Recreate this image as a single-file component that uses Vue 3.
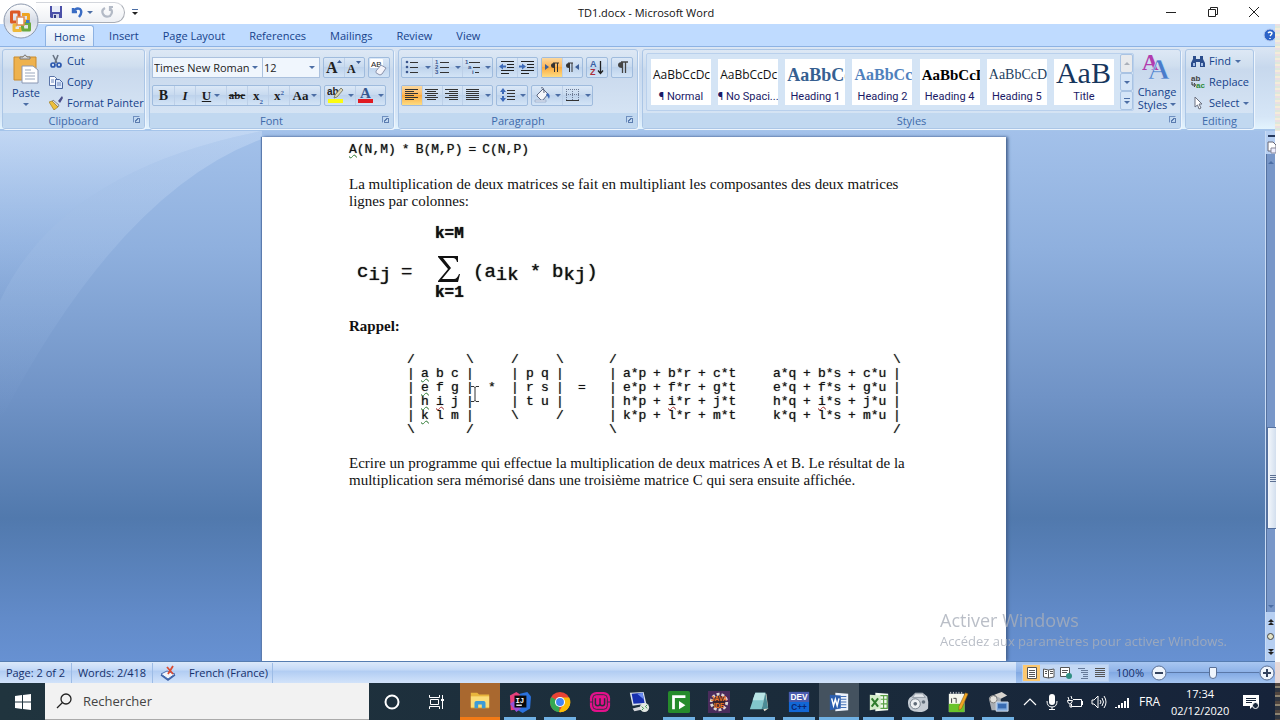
<script setup>
import { ref } from 'vue'

const tabs = ['Home', 'Insert', 'Page Layout', 'References', 'Mailings', 'Review', 'View']

const lines = (rows, color = '#222') =>
  rows.map(([x, y, w]) => `<path d="M${x} ${y}.5h${w}" stroke="${color}"/>`).join('')

const icons = {
  grow: '<text x="1" y="15" font-family="Liberation Serif" font-size="16" font-weight="bold" fill="#222">A</text><path d="M12 5l2.500-3 2.500 3z" fill="#3d5f98"/>',
  shrink: '<text x="2" y="15" font-family="Liberation Serif" font-size="12" font-weight="bold" fill="#222">A</text><path d="M11 3h5l-2.500 3z" fill="#3d5f98"/>',
  clear: '<rect x="0" y="1" width="13" height="9" rx="1" fill="#fff"/><text x="1" y="9" font-family="Liberation Sans" font-size="8" fill="#222">AB</text><path d="M6 13l5-6 5 3-4 6q-2 2-4 0-3-1-2-3z" fill="#f4f4fa" stroke="#8b93ac"/>',
  highlight: '<text x="0" y="9" font-family="Liberation Sans" font-size="10" font-weight="bold" fill="#222">ab</text><path d="M8 9l6-7 2 2-6 7-3 1z" fill="#dcd6b4" stroke="#6d6d5a" stroke-width=".8"/><path d="M1 13h15v4H1z" fill="#fbfb12"/>',
  fontcolor: '<text x="3" y="12" font-family="Liberation Serif" font-size="15" font-weight="bold" fill="#35588f">A</text><path d="M1 13h15v4H1z" fill="#e01b22"/>',
  bullets: '<g fill="#3a568e"><circle cx="3" cy="4" r="1.300"/><circle cx="3" cy="9" r="1.300"/><circle cx="3" cy="14" r="1.300"/></g>' + lines([[6, 4, 8], [6, 9, 8], [6, 14, 8]], '#333'),
  numbers: '<g font-family="Liberation Sans" font-size="6" font-weight="bold" fill="#3a568e"><text x="1" y="6">1</text><text x="1" y="11">2</text><text x="1" y="16">3</text></g>' + lines([[6, 4, 9], [6, 9, 9], [6, 14, 9]], '#333'),
  multi: '<g font-family="Liberation Sans" font-size="6" font-weight="bold" fill="#3a568e"><text x="1" y="6">1</text><text x="4" y="11">a</text><text x="8" y="16">i</text></g>' + lines([[5, 4, 11], [9, 9, 7], [11, 14, 4]], '#333'),
  outdent: lines([[3, 3, 13], [9, 6, 7], [9, 9, 7], [3, 12, 13], [3, 15, 8]]) + '<path d="M1 8.500l4-3v2h3v2H5v2z" fill="#3d6ab8"/>',
  indent: lines([[3, 3, 13], [9, 6, 7], [9, 9, 7], [3, 12, 13], [3, 15, 8]]) + '<path d="M8 8.500l-4-3v2H1v2h3v2z" fill="#3d6ab8"/>',
  ltr: '<path d="M2 6l4 3-4 3z" fill="#3d5f98"/><path d="M10 5h6M11.500 5v9M14.500 5v9" stroke="#333" fill="none"/><path d="M11 5v5q-3 0-3-2.500T11 5z" fill="#333"/>',
  rtl: '<path d="M16 6l-4 3 4 3z" fill="#3d5f98"/><path d="M5 5h5M6.500 5v9M9 5v9" stroke="#333" fill="none"/><path d="M6 5v5q-3 0-3-2.500T6 5z" fill="#333"/>',
  sort: '<g font-family="Liberation Sans" font-size="9" font-weight="bold"><text x="2" y="9" fill="#3a5fa5">A</text><text x="2" y="17" fill="#ab2e3c">Z</text></g><path d="M12.500 3v12M10 12.500l2.500 3 2.500-3" stroke="#222" stroke-width="1.300" fill="none"/>',
  pilcrow: '<path d="M8 4h7M9.500 4v11M12.500 4v11" stroke="#444" stroke-width="1.300"/><path d="M9 4v6Q5 10 5 7t4-3z" fill="#444"/>',
  left: lines([[2, 3, 13], [2, 5, 9], [2, 7, 13], [2, 9, 9], [2, 11, 13], [2, 13, 9]], '#333'),
  center: lines([[2, 3, 13], [4, 5, 9], [2, 7, 13], [4, 9, 9], [2, 11, 13], [4, 13, 9]], '#333'),
  right: lines([[2, 3, 13], [6, 5, 9], [2, 7, 13], [6, 9, 9], [2, 11, 13], [6, 13, 9]], '#333'),
  justify: lines([[2, 3, 13], [2, 5, 13], [2, 7, 13], [2, 9, 13], [2, 11, 13], [2, 13, 13]], '#333'),
  spacing: lines([[8, 4, 8], [8, 7, 8], [8, 10, 8], [8, 13, 8]], '#333') + '<path d="M4 2l3 4H5v2H3V6H1zM4 16l3-4H5v-2H3v2H1z" fill="#3d6ab8"/>',
  shading: '<path d="M3 9l6-6 5 5-5 6q-1 1-2 0L3 10z" fill="#f4f6fb" stroke="#5c6680"/><path d="M7 2q3-2 3 5" stroke="#5c6680" fill="none"/><path d="M13 7q4 1 2 6-1-3-3-4z" fill="#3d6ab8"/><path d="M1 14h11v2H1z" fill="#dfe6f2" stroke="#8ba0c0" stroke-width=".6"/>',
  borders: '<path d="M2.500 3v11M8.500 3v11M14.500 3v11M2 3.500h13M2 8.500h13" stroke="#6c7a94" stroke-dasharray="1 1"/><path d="M2 14.500h13" stroke="#333"/>',
}

const fontRow = [
  { key: 'B', cls: 'b', name: 'Bold', w: 'w22' },
  { key: 'I', cls: 'i', name: 'Italic', w: 'w22' },
  { key: 'U', cls: 'u', name: 'Underline', w: 'w32', drop: true },
  { key: 'abc', cls: 's', name: 'Strikethrough', w: 'w22' },
  { key: 'x', sub: '2', name: 'Subscript', w: 'w22' },
  { key: 'x', sup: '2', name: 'Superscript', w: 'w22' },
  { key: 'Aa', name: 'Change Case', w: 'w32', drop: true },
]

const paraRows = [
  [
    [{ i: 'bullets', n: 'Bullets', drop: true }, { i: 'numbers', n: 'Numbering', drop: true }, { i: 'multi', n: 'Multilevel List', drop: true }],
    [{ i: 'outdent', n: 'Decrease Indent' }, { i: 'indent', n: 'Increase Indent' }],
    [{ i: 'ltr', n: 'Left-to-Right', on: true }, { i: 'rtl', n: 'Right-to-Left' }],
    [{ i: 'sort', n: 'Sort' }],
    [{ i: 'pilcrow', n: 'Show Paragraph Marks' }],
  ],
  [
    [{ i: 'left', n: 'Align Left', on: true }, { i: 'center', n: 'Center' }, { i: 'right', n: 'Align Right' }, { i: 'justify', n: 'Justify', drop: true }],
    [{ i: 'spacing', n: 'Line Spacing', drop: true }],
    [{ i: 'shading', n: 'Shading', drop: true }, { i: 'borders', n: 'Borders', drop: true }],
  ],
]

const styles = [
  { s: 'AaBbCcDc', n: '¶ Normal', c: 'normal' },
  { s: 'AaBbCcDc', n: '¶ No Spaci...', c: 'normal' },
  { s: 'AaBbCc', n: 'Heading 1', c: 'h1' },
  { s: 'AaBbCc', n: 'Heading 2', c: 'h2' },
  { s: 'AaBbCcD', n: 'Heading 4', c: 'h4' },
  { s: 'AaBbCcD', n: 'Heading 5', c: 'h5' },
  { s: 'AaB', n: 'Title', c: 'title' },
]

const _ = ''
const g = (t) => ({ t, m: 'green' })
const r = (t) => ({ t, m: 'red' })
const matrix = [
  ['/', _, _, _, '\\', _, '/', _, _, '\\', _, '/', _, _, _, _, _, _, _, _, _, _, '\\'],
  ['|', g('a'), 'b', 'c', '|', _, '|', 'p', 'q', '|', _, '|', 'a*p', '+', 'b*r', '+', 'c*t', 'a*q', '+', 'b*s', '+', 'c*u', '|'],
  ['|', g('e'), 'f', 'g', '|', '*', '|', 'r', 's', '|', '=', '|', 'e*p', '+', 'f*r', '+', 'g*t', 'e*q', '+', 'f*s', '+', 'g*u', '|'],
  ['|', g('h'), r('i'), 'j', '|', _, '|', 't', 'u', '|', _, '|', 'h*p', '+', { t: 'i', m: 'red', rest: '*r' }, '+', 'j*t', 'h*q', '+', { t: 'i', m: 'red', rest: '*s' }, '+', 'j*u', '|'],
  ['|', g('k'), 'l', 'm', '|', _, '\\', _, _, '/', _, '|', 'k*p', '+', 'l*r', '+', 'm*t', 'k*q', '+', 'l*s', '+', 'm*u', '|'],
  ['\\', _, _, _, '/', _, _, _, _, _, _, '\\', _, _, _, _, _, _, _, _, _, _, '/'],
].map((row) => row.map((c) => (typeof c === 'string' ? { t: c } : c)))

const apps = [
  { n: 'File Explorer', cls: 'explorer', svg: '<path d="M2 4h7l2 2h11v15H2z" fill="#e9b53c"/><path d="M2 8h20v12H2z" fill="#fbdc77"/><path d="M6 21v-6q0-2 2-2h8q2 0 2 2v6h-4v-4h-4v4z" fill="#3c9bd6"/>' },
  { n: 'IntelliJ IDEA', run: 1, svg: '<path d="M1 5l7-4 6 4-3 15-9 1z" fill="#e7407b"/><path d="M12 3l8-2 4 5-1 13-8 5-7-4z" fill="#2b72dd"/><path d="M1 14l7 9 5-4-7-8z" fill="#9751d8"/><path d="M6 5h13v13H6z" fill="#090909"/><text x="7" y="13" font-family="Liberation Mono" font-size="8" font-weight="bold" fill="#fff">IJ</text><path d="M8 15.500h6" stroke="#fff" stroke-width="1.500"/>' },
  { n: 'Chrome', run: 1, svg: '<circle cx="12" cy="12" r="11" fill="#e94335"/><path d="M12 12L2.500 6.500A11 11 0 0 0 11 23z" fill="#35a853"/><path d="M12 12h11A11 11 0 0 1 11 23l5-9z" fill="#fbbc05"/><path d="M12 7h10a11 11 0 0 1-11 16l5-9z" fill="#fbbc05"/><circle cx="12" cy="12" r="5.500" fill="#fff"/><circle cx="12" cy="12" r="4.300" fill="#4285f4"/>' },
  { n: 'WampServer', svg: '<rect x="1" y="1" width="22" height="22" rx="7" fill="#e3118b"/><rect x="4" y="4" width="16" height="16" rx="4" fill="none" stroke="#26313b"/><path d="M7 8v6q0 2 2.500 2t2.500-2V8v6q0 2 2.500 2t2.500-2V8" fill="none" stroke="#26313b" stroke-width="1.600"/><path d="M1 12h3M20 12h3" stroke="#26313b"/>' },
  { n: 'Remote Desktop', svg: '<path d="M2 2l15-1 3 13-15 2z" fill="#dce3ee"/><path d="M4 3l12-1 2 11-12 1z" fill="#1730b0"/><path d="M10 3l6-1 1 7z" fill="#6a8cf0"/><path d="M5 19l9-2 3 3-10 2z" fill="#d5d7dc"/><circle cx="18" cy="18" r="5" fill="#e4e8e4"/><path d="M15 17l2 2-2 2M21 15l-2 2 2 2" stroke="#2f8d3f" fill="none"/>' },
  { n: 'Camtasia', run: 1, svg: '<rect x="0" y="0" width="24" height="24" rx="2" fill="#268b2b"/><path d="M6 20V6h13" stroke="#fff" stroke-width="3" fill="none"/><path d="M12 11l7 4.500-7 4.500z" fill="#fff"/>' },
  { n: 'Java IDE', run: 1, svg: '<path d="M0 0h24v24H0z" fill="#4a2c5c"/><circle cx="12" cy="12" r="8" fill="none" stroke="#ded6d4" stroke-width="4" stroke-dasharray="3 2"/><circle cx="12" cy="12" r="7" fill="#3a2430"/><text x="12" y="11" text-anchor="middle" font-family="Liberation Sans" font-size="7" font-weight="bold" fill="#ef7a26">JAVA</text><text x="12" y="19" text-anchor="middle" font-family="Liberation Sans" font-size="7" font-weight="bold" fill="#ef7a26">IDE</text>' },
  { n: 'Notepad', run: 1, svg: '<path d="M8 3h12l2 16-4 3z" fill="#e3dfd0"/><path d="M8 2h11l-4 18H2z" fill="#82c6cc"/><path d="M8 2h11l-2 8H5z" fill="#b9e4e5"/><path d="M19 2l3 17-7 1z" fill="#4b8b96"/>' },
  { n: 'Dev-C++', run: 1, svg: '<path d="M1 1h22v22H1z" fill="#1267d6"/><path d="M1 1h22v11H1z" fill="#4a5cae"/><text x="12" y="10" text-anchor="middle" font-family="Liberation Sans" font-size="9" font-weight="bold" fill="#fff">DEV</text><text x="12" y="21" text-anchor="middle" font-family="Liberation Sans" font-size="9" font-weight="bold" fill="#0a2470">C++</text>' },
  { n: 'Word', run: 1, cls: 'current', svg: '<path d="M8 2l14 1v18l-14 1z" fill="#edf2fb"/><path d="M14 6h6M14 9h6M14 12h6M14 15h6M14 18h6" stroke="#4471b8" stroke-width="1.300"/><path d="M2 4l12 1v14L2 21z" fill="#2c5eae"/><path d="M4 8l2 8 2-7 2 7 2-8" stroke="#fff" stroke-width="1.600" fill="none"/>' },
  { n: 'Excel', run: 1, svg: '<path d="M8 2l14 1v18l-14 1z" fill="#f2faf0"/><path d="M13 5h8v14h-8M13 9h8M13 14h8M17 5v14" stroke="#5aa145" stroke-width="1.300" fill="none"/><path d="M2 4l12 1v14L2 21z" fill="#d4ecc9"/><path d="M4 8l7 9M11 8l-7 9" stroke="#2e7b2b" stroke-width="2.200"/>' },
  { n: 'Postgres', run: 1, svg: '<path d="M1 13q0-5 4-7l4-4h8l5 4q2 6 1 13-3 4-10 4-12 0-12-10z" fill="#c4cbd3"/><path d="M9 3h8l3 4H6z" fill="#e4e8ec" stroke="#727d88" stroke-width=".7"/><circle cx="9" cy="14" r="5.500" fill="#edf0f3" stroke="#727d88"/><circle cx="9" cy="14" r="2" fill="#5f6a77"/><circle cx="18" cy="12" r="2" fill="#64707d"/>' },
  { n: 'Notepad++', run: 1, svg: '<path d="M2 3h17v20H2z" fill="#f5f7ee"/><path d="M2 14h17v9H2z" fill="#69c42a"/><path d="M4 3v-2M7 3v-2M10 3v-2M13 3v-2M16 3v-2" stroke="#d5d9dd"/><path d="M5 8v5M7 8h3v5" stroke="#333" fill="none"/><path d="M20 2l3 1-7 16-3 2v-4z" fill="#f0a623" stroke="#7b571b" stroke-width=".6"/>' },
  { n: 'Recorder', run: 1, svg: '<path d="M8 4l8-3 6 4-8 4z" fill="#d8d5cf"/><path d="M2 8q2-5 8-2l5 2v13H5z" fill="#a8adb3"/><circle cx="7" cy="9" r="4" fill="#e4e2dd" stroke="#777"/><path d="M10 12h13v10H10z" fill="#7fa9dc" stroke="#d9e2ee"/><path d="M12 14h9v5h-9z" fill="#386bb1"/>' },
]

const font = ref('Times New Roman')
const size = ref('12')
const zoom = ref(50)
const query = ref('')
</script>

<template>
  <div class="desktop">
    <div class="screen">
      <header class="titlebar">
        <div class="quick">
          <button class="q" aria-label="Save"><svg width="14" height="14" viewBox="0 0 14 14"><path d="M1 1h12v12H2l-1-1z" fill="#4b50a8" /><path d="M3 1h8v6H3z" fill="#e9edf8" /><path d="M4 9h6v4H4z" fill="#cfd3e6" /><path d="M5 10h2v3H5z" fill="#333a80" /></svg></button>
          <button class="q" aria-label="Undo"><svg width="14" height="14" viewBox="0 0 14 14"><path d="M3 3v4h4M3 7q3-5 7-3 3 3-1 8" fill="none" stroke="#3a6cc4" stroke-width="2.400" /></svg></button>
          <button class="q small" aria-label="Undo list"><i class="arr"></i></button>
          <button class="q" aria-label="Repeat"><svg width="14" height="14" viewBox="0 0 14 14"><path d="M5 3Q1 5 3 9t7 2q4-4 0-8M10 6V2h3" fill="none" stroke="#b3bac6" stroke-width="2.200" /></svg></button>
        </div>
        <button class="q customize" aria-label="Customize Quick Access Toolbar"><i class="bar"></i><i class="arr dark"></i></button>
        <h1>TD1.docx - Microsoft Word</h1>
        <div class="winbtns">
          <button aria-label="Minimize"><svg width="12" height="12" viewBox="0 0 12 12"><path d="M1 6.500h10" stroke="#222" /></svg></button>
          <button aria-label="Restore"><svg width="12" height="12" viewBox="0 0 12 12" fill="none" stroke="#222"><path d="M1.500 3.500h7v7h-7zM3.500 3V1.500h7v7H9" /></svg></button>
          <button aria-label="Close"><svg width="12" height="12" viewBox="0 0 12 12"><path d="M1 1l10 10M11 1L1 11" stroke="#222" /></svg></button>
        </div>
      </header>
      <button class="orb" aria-label="Office Button">
        <svg width="38" height="38" viewBox="0 0 38 38">
          <defs><linearGradient id="orb" x2="0" y2="1"><stop stop-color="#fff" /><stop offset=".5" stop-color="#d5dbe6" /><stop offset="1" stop-color="#f6f9fd" /></linearGradient></defs>
          <circle cx="19" cy="19" r="17" fill="url(#orb)" stroke="#8c98ad" />
          <g fill="none" stroke-width="3" stroke-linejoin="round"><path d="M17 18v-8H9.500v10H14" stroke="#dc5a26" /><path d="M20 12.500h6.500V19H22" stroke="#eea420" /><path d="M15 23h-3v5.500h6.500V25" stroke="#eeb93a" /><path d="M20 21.500h7.500V28H21z" stroke="#6aa93e" /><path d="M24 19.500h3.500" stroke="#3a78c8" /></g>
          <path d="M15 15h7v8h-7z" fill="#fff" stroke="#e08a52" stroke-width="1.500" />
        </svg>
      </button>

      <nav class="tabs">
        <button v-for="(t, n) in tabs" :key="t" :class="{ active: n === 0 }">{{ t }}</button>
        <button class="help" aria-label="Help"><svg width="12" height="14" viewBox="0 0 12 14"><circle cx="7" cy="7" r="6" fill="#2b62c8" stroke="#b6c8ea" /><path d="M5 5q2-2 4 0 0 1-2 3M7 10v1" stroke="#fff" stroke-width="1.500" fill="none" /></svg></button>
      </nav>

      <section class="ribbon">
        <div class="group clipboard">
          <div class="body">
            <button class="big">
              <svg width="26" height="30" viewBox="0 0 26 30"><path d="M1 3h22v23H1z" fill="#eeb24e" stroke="#c98a2c" /><path d="M7 5V3h3q2-4 4 0h3v2z" fill="#d8d8d8" stroke="#777" /><path d="M9 12h11l5 4v13H9z" fill="#fff" stroke="#8b98b4" /><path d="M12 16h6M12 19h10M12 22h10M12 25h10" stroke="#9aa7bd" /></svg>
              <span>Paste</span><i class="arr"></i>
            </button>
            <div class="stack">
              <button><svg width="14" height="14" viewBox="0 0 14 14"><path d="M4 1l4 8M9 1L6 9" stroke="#6b7686" stroke-width="1.600" /><circle cx="4" cy="11" r="2" fill="none" stroke="#2d59ae" stroke-width="1.700" /><circle cx="10" cy="11" r="2" fill="none" stroke="#2d59ae" stroke-width="1.700" /></svg>Cut</button>
              <button><svg width="14" height="14" viewBox="0 0 14 14"><path d="M.5 1.500h5l3 3v6h-8z" fill="#f7faff" stroke="#5a74a8" /><path d="M6.500 4.500h4l3 3v6h-7z" fill="#dbe7fa" stroke="#46649f" /><path d="M8 8h4M8 10h4M2 5h3M2 7h3" stroke="#6c88bd" /></svg>Copy</button>
              <button><svg width="14" height="14" viewBox="0 0 14 14"><path d="M9 5l4-5 1 2-3 5z" fill="#4b4e88" /><path d="M4 4l6 5-1 2-6-5z" fill="#d8dbe5" stroke="#555" stroke-width=".6" /><path d="M0 6l3-1 6 6-4 3z" fill="#edc03d" stroke="#96731b" stroke-width=".6" /></svg>Format Painter</button>
            </div>
          </div>
          <footer>Clipboard<i class="launch"></i></footer>
        </div>

        <div class="group font">
          <div class="body rows">
            <div class="row">
              <div class="selects">
                <label class="sel name"><select v-model="font" aria-label="Font"><option>Times New Roman</option></select><i class="arr"></i></label>
                <label class="sel size"><select v-model="size" aria-label="Font Size"><option>12</option></select><i class="arr"></i></label>
              </div>
              <div class="bg"><button class="w21" aria-label="Grow Font"><svg class="ic" v-html="icons.grow" /></button><button class="w21" aria-label="Shrink Font"><svg class="ic" v-html="icons.shrink" /></button></div>
              <div class="bg"><button class="w21" aria-label="Clear Formatting"><svg class="ic" v-html="icons.clear" /></button></div>
            </div>
            <div class="row">
              <div class="bg">
                <button v-for="f in fontRow" :key="f.name" :class="f.w" :aria-label="f.name"><span class="glyph" :class="f.cls">{{ f.key }}<sub v-if="f.sub">{{ f.sub }}</sub><sup v-if="f.sup">{{ f.sup }}</sup></span><i v-if="f.drop" class="arr"></i></button>
              </div>
              <div class="bg"><button class="w31" aria-label="Text Highlight Color"><svg class="ic" v-html="icons.highlight" /><i class="arr"></i></button><button class="w31" aria-label="Font Color"><svg class="ic" v-html="icons.fontcolor" /><i class="arr"></i></button></div>
            </div>
          </div>
          <footer>Font<i class="launch"></i></footer>
        </div>

        <div class="group para">
          <div class="body rows">
            <div v-for="(row, ri) in paraRows" :key="ri" class="row">
              <div v-for="(bg, bi) in row" :key="bi" class="bg">
                <button v-for="b in bg" :key="b.n" :class="[b.drop ? 'w31' : 'w21', { on: b.on }]" :aria-label="b.n"><svg class="ic" v-html="icons[b.i]" /><i v-if="b.drop" class="arr"></i></button>
              </div>
            </div>
          </div>
          <footer>Paragraph<i class="launch"></i></footer>
        </div>

        <div class="group styles">
          <div class="body">
            <div class="gallery">
              <div class="items">
                <button v-for="s in styles" :key="s.n"><span class="sample" :class="s.c">{{ s.s }}</span><span class="nm">{{ s.n }}</span></button>
              </div>
              <div class="scroller"><button class="off" aria-label="Previous styles"><i class="arr up"></i></button><button aria-label="Next styles"><i class="arr"></i></button><button aria-label="More styles"><i class="bar"></i><i class="arr"></i></button></div>
            </div>
            <button class="big change">
              <svg width="30" height="28" viewBox="0 0 30 28"><text x="0" y="17" font-family="Liberation Serif" font-size="23" font-weight="bold" fill="#b13cae">A</text><text x="6" y="26" font-family="Liberation Serif" font-size="30" font-weight="bold" fill="#4a7ccb" stroke="#dfe9f7" stroke-width=".5">A</text></svg>
              <span>Change</span><span>Styles <i class="arr"></i></span>
            </button>
          </div>
          <footer>Styles<i class="launch"></i></footer>
        </div>

        <div class="group editing">
          <div class="body">
            <div class="stack">
              <button><svg width="14" height="14" viewBox="0 0 14 14"><path d="M2 2h3v3h4V2h3v3l2 4v4H9V8H5v5H0V9l2-4z" fill="#2b4d8c" /><path d="M2 9h2v3H2zM10 9h2v3h-2z" fill="#a7c0e6" /></svg>Find <i class="arr"></i></button>
              <button><svg width="14" height="14" viewBox="0 0 14 14"><text x="0" y="6" font-family="Liberation Sans" font-size="8" font-weight="bold" fill="#444">ab</text><text x="5" y="13" font-family="Liberation Sans" font-size="8" font-weight="bold" fill="#2b8a36">ac</text><path d="M1 7v3h3M3 8l1.500 2L3 12" stroke="#333" fill="none" /></svg>Replace</button>
              <button><svg width="14" height="14" viewBox="0 0 14 14"><path d="M4 1v10l2.500-2L8 13l2-1-2-4h3z" fill="#fff" stroke="#6a7080" /></svg>Select <i class="arr"></i></button>
            </div>
          </div>
          <footer>Editing</footer>
        </div>
      </section>

      <main class="work">
        <div class="canvas">
          <svg class="swoosh" viewBox="0 0 262 420" preserveAspectRatio="none" aria-hidden="true">
            <defs>
              <linearGradient id="s1" x2="0" y2="1"><stop stop-color="#dbe9fb" stop-opacity=".55" /><stop offset="1" stop-color="#9fc0ee" stop-opacity="0" /></linearGradient>
            </defs>
            <path d="M0 0h262Q60 40 0 170z" fill="url(#s1)" />
            <path d="M262 8Q120 60 0 290V170Q60 40 262 0z" fill="url(#s1)" opacity=".6" />
          </svg>
          <article class="page">
            <p class="mono def"><span><u class="wave green">A</u>(N,M)</span><span>*</span><span>B(M,P)</span><span>=</span><span>C(N,P)</span></p>
            <p class="text first">La multiplication de deux matrices se fait en multipliant les composantes des deux matrices<br>lignes par colonnes:</p>
            <div class="formula">
              <span class="lhs">c<sub>ij</sub></span><span class="eq">=</span>
              <span class="sum"><small>k=M</small><svg width="24" height="28" viewBox="0 0 24 28"><path d="M1 1h20v6h-1q-1-4-4-4H6l8 10-9 11h12q3 0 5-5h1l-2 8H1v-1l10-12L1 2z" fill="#111" /></svg><small>k=1</small></span>
              <span class="rhs"><span>(a<sub>ik</sub></span><span>*</span><span>b<sub>kj</sub>)</span></span>
            </div>
            <h2>Rappel:</h2>
            <div class="matrix mono">
              <div v-for="(row, ri) in matrix" :key="ri" class="mrow">
                <span v-for="(c, ci) in row" :key="ci"><u v-if="c.m" class="wave" :class="c.m">{{ c.t }}</u><template v-else>{{ c.t }}</template>{{ c.rest }}</span>
              </div>
            </div>
            <p class="text last">Ecrire un programme qui effectue la multiplication de deux matrices A et B. Le résultat de la<br>multiplication sera mémorisé dans une troisième matrice C qui sera ensuite affichée.</p>
            <svg class="caret" width="8" height="16" viewBox="0 0 8 16"><path d="M0 .500h3l1 1 1-1h3M4 1v14M0 15.500h3l1-1 1 1h3" stroke="#333" fill="none" /></svg>
          </article>
          <div class="watermark"><strong>Activer Windows</strong><span>Accédez aux paramètres pour activer Windows.</span></div>
        </div>
        <aside class="vscroll">
          <i class="split"></i>
          <button class="ruler" aria-label="View Ruler"><svg width="10" height="14" viewBox="0 0 10 14"><path d="M2 2h5l3 3v6H2z" fill="#fff" stroke="#667" /><path d="M5 8h5v5H5z" fill="#eef" stroke="#889" /></svg></button>
          <div class="track"><i class="arr up"></i><div class="thumb"><i></i><i></i><i></i><i></i></div><i class="arr"></i></div>
          <div class="browse">
            <button aria-label="Previous Page"><i class="arr up dark"></i><i class="arr up dark"></i></button>
            <button aria-label="Select Browse Object"><i class="ball"></i></button>
            <button aria-label="Next Page"><i class="arr dark"></i><i class="arr dark"></i></button>
          </div>
        </aside>
      </main>

      <footer class="status">
        <button class="pg">Page: 2 of 2</button>
        <button class="wd">Words: 2/418</button>
        <button class="pr" aria-label="Proofing"><svg width="16" height="16" viewBox="0 0 16 16"><path d="M1 9l6-3 8 3-7 5z" fill="#f1f5fb" stroke="#4b6fb3" /><path d="M1 10l7 5 7-5" stroke="#3e62a6" fill="none" stroke-width="1.500" /><path d="M7 2l6 7M13 1L8 9" stroke="#db4b32" stroke-width="1.800" /></svg></button>
        <button class="lg">French (France)</button>
        <div class="right">
          <div class="views">
            <button class="on" aria-label="Print Layout"><svg width="12" height="12" viewBox="0 0 12 12"><path d="M1.500.500h9v11h-9z" fill="#fff" stroke="#555" /><path d="M3 3.500h6M3 5.500h6M3 7.500h6M3 9.500h6" stroke="#555" /></svg></button>
            <button aria-label="Full Screen Reading"><svg width="12" height="12" viewBox="0 0 12 12"><path d="M.5 2l5 1 5.500-1v8l-5.500 1-5-1z" fill="#fff" stroke="#555" /><path d="M5.500 3v8M2 4.500h2M2 6.500h2M7 4.500h3M7 6.500h3" stroke="#555" /></svg></button>
            <button aria-label="Web Layout"><svg width="12" height="12" viewBox="0 0 12 12"><path d="M.5.500h9v9h-9z" fill="#fff" stroke="#555" /><path d="M2 3.500h6M2 5.500h5" stroke="#555" /><circle cx="9" cy="9" r="3" fill="#2f8f82" /></svg></button>
            <button aria-label="Outline"><svg width="12" height="12" viewBox="0 0 12 12"><path d="M1 1.500h7M4 3.500h7M4 5.500h7M6 7.500h5M6 9.500h5M4 11.500h7" stroke="#667a9a" /></svg></button>
            <button aria-label="Draft"><svg width="12" height="12" viewBox="0 0 12 12"><path d="M1 1.500h10M1 3.500h10M1 5.500h10M1 7.500h10M1 9.500h10" stroke="#555" /></svg></button>
          </div>
          <button class="pct">100%</button>
          <button class="round" aria-label="Zoom Out"><svg width="16" height="16" viewBox="0 0 16 16"><circle cx="8" cy="8" r="7" fill="#eef4fc" stroke="#5a6f95" /><path d="M4 8h8" stroke="#33425e" stroke-width="2" /></svg></button>
          <input v-model="zoom" type="range" min="0" max="100" aria-label="Zoom">
          <button class="round" aria-label="Zoom In"><svg width="16" height="16" viewBox="0 0 16 16"><circle cx="8" cy="8" r="7" fill="#eef4fc" stroke="#5a6f95" /><path d="M4 8h8M8 4v8" stroke="#33425e" stroke-width="2" /></svg></button>
        </div>
      </footer>

      <footer class="taskbar">
        <button class="start" aria-label="Start"><svg width="16" height="16" viewBox="0 0 16 16"><path d="M0 2l7-1v6.500H0zM8 1l8-1v7.500H8zM0 8.500h7V15l-7-1zM8 8.500h8V16l-8-1z" fill="#fff" /></svg></button>
        <label class="search"><svg width="16" height="16" viewBox="0 0 16 16"><circle cx="10" cy="6" r="5" fill="none" stroke="#222" stroke-width="1.300" /><path d="M6.500 9.500L1 15" stroke="#222" stroke-width="1.300" /></svg><input v-model="query" type="text" placeholder="Rechercher" aria-label="Rechercher"></label>
        <button class="sys" aria-label="Cortana"><svg width="16" height="16" viewBox="0 0 16 16"><circle cx="8" cy="8" r="6.500" fill="none" stroke="#fff" stroke-width="2" /></svg></button>
        <button class="sys" aria-label="Task View"><svg width="16" height="16" viewBox="0 0 16 16" fill="none" stroke="#fff"><path d="M.500 1v2.500h10V1M1.500 5.500h8v5h-8zM.500 15v-2.500h10V15M13.500 1v14" /><path d="M12 5h3v2h-3z" fill="#fff" stroke="none" /></svg></button>
        <div class="apps">
          <button v-for="a in apps" :key="a.n" :class="[a.cls, { run: a.run }]" :aria-label="a.n"><svg width="22" height="22" viewBox="0 0 24 24" v-html="a.svg" /></button>
        </div>
        <div class="tray">
          <svg width="14" height="14" viewBox="0 0 14 14"><path d="M1 10l6-6 6 6" stroke="#fff" fill="none" stroke-width="1.200" /></svg>
          <svg width="14" height="16" viewBox="0 0 14 16"><rect x="4" width="6" height="11" rx="3" fill="#fff" /><path d="M2 7q0 6 5 6t5-6M7 13v3M4 15.500h6" stroke="#fff" fill="none" /></svg>
          <svg width="16" height="14" viewBox="0 0 16 14"><path d="M6 4.500h8.500v7H4.500V9M15.500 6v4M1 2l1 3M4 1l1 3M.500 5.500h5q-1 4-3 3-2 0-2-3M3 9v3h2" stroke="#fff" fill="none" /></svg>
          <svg width="16" height="14" viewBox="0 0 16 14"><path d="M1 5h2l4-4v12L3 9H1zM9 5q2 2 0 4M11 3q3 4 0 8M13 1q4 6 0 12" stroke="#fff" fill="none" /></svg>
          <svg width="16" height="14" viewBox="0 0 16 14"><path d="M1 13v-1M4 13v-3M7 13V8M10 13V6M13 13V3" stroke="#fff" stroke-width="2" /></svg>
          <span class="kb">FRA</span>
          <time>17:34<br>02/12/2020</time>
          <svg class="note" width="16" height="16" viewBox="0 0 16 16"><path d="M0 1h16v11h-6l-3 3v-3H0z" fill="#fff" /><path d="M3 4.500h10M3 6.500h10M3 8.500h6" stroke="#17263a" /><circle cx="12.500" cy="11.500" r="3" fill="#17263a" stroke="#fff" /></svg>
        </div>
      </footer>
    </div>
    <div class="edge" aria-hidden="true"><i class="e1"></i><i class="e2"></i><i class="e3"></i><i class="e4"></i><i class="e5"></i></div>
  </div>
</template>

<style>
html, body { margin: 0; background: #fff; }
</style>

<style scoped>
* { box-sizing: border-box; }
button, input, select { font: inherit; color: inherit; border: 0; background: none; padding: 0; margin: 0; }
button { display: flex; align-items: center; justify-content: center; white-space: nowrap; }
i { font-style: normal; display: block; flex: none; }
svg { flex: none; display: block; }
p, h1, h2 { margin: 0; }

.desktop { display: flex; min-height: 100vh; font: 11px/14px "Open Sans", "Noto Sans", sans-serif; color: #15428b; overflow: hidden; }
.screen { flex: 1; min-width: 0; display: flex; flex-direction: column; position: relative; }
.edge { width: 5px; display: flex; flex-direction: column; background: #fff; }
.e1 { height: 24px; }
.e2 { height: 107px; background: repeating-linear-gradient(#eadfe3 0 2px, #dde8dd 2px 4px, #f4ecd9 4px 6px); }
.e3 { flex: 1; background: #fdfdfd; }
.e4 { height: 21px; background: #e6d8d8; }
.e5 { height: 37px; background: repeating-linear-gradient(#50453f 0 3px, #8d8371 3px 5px, #2f3540 5px 9px); }

.arr { width: 0; height: 0; border: 3px solid transparent; border-top-color: #4c6ea5; border-bottom: 0; }
.arr.up { border: 3px solid transparent; border-bottom-color: #4c6ea5; border-top: 0; }
.arr.dark { border-top-color: #222; }
.arr.up.dark { border-top: 0; border-bottom-color: #222; }
.bar { width: 6px; height: 1px; background: #4c6ea5; margin-bottom: 2px; }

.titlebar { height: 24px; display: flex; align-items: center; background: #fff; color: #111; }
.quick { margin-left: 36px; width: 89px; height: 21px; padding-left: 12px; display: flex; align-items: center; gap: 6px; border: 1px solid #a9adb5; border-left: 0; border-top-color: #d3d6dc; border-radius: 0 11px 11px 0; background: linear-gradient(#fff, #eef0f4); }
.q { width: 15px; height: 16px; }
.q.small { width: 6px; margin-left: -3px; }
.customize { flex-direction: column; margin-left: 2px; }
h1 { flex: 1; text-align: center; font: 11px/16px "Open Sans", sans-serif; padding-top: 2px; }
.winbtns { display: flex; width: 125px; }
.winbtns button { width: 42px; height: 24px; }
.orb { position: absolute; left: 2px; top: 2px; z-index: 2; }

.tabs { height: 23px; display: flex; align-items: flex-end; padding-left: 45px; background: #bfdbff; border-bottom: 1px solid #8db2e3; }
.tabs button { height: 22px; padding: 2px 12px 0; border-radius: 3px 3px 0 0; }
.tabs .active { height: 21px; padding: 1px 8px 0; margin-right: 3px; background: linear-gradient(#f6faff, #dfeaf7); border: 1px solid #8db2e3; border-bottom: 0; }
.tabs .help { margin-left: auto; padding: 0; }

.ribbon { height: 84px; display: flex; gap: 4px; padding: 2px 21px 2px 2px; background: linear-gradient(#dbe6f4, #c7d8ed 25%, #d6e6f7 85%, #e3f4fe); border-bottom: 2px solid #a5c4ea; }
.group { height: 80px; display: flex; flex-direction: column; border: 1px solid #abc6e6; border-radius: 3px; background: linear-gradient(#dde8f5, #d0dfef 20%, #c9d9ed 25%, #d9e7f6); box-shadow: 1px 1px 0 #eef5fd; overflow: hidden; }
.body { flex: 1; display: flex; min-height: 0; }
.group > footer { height: 15px; display: flex; align-items: center; justify-content: center; position: relative; background: #c1d8f0; color: #3e6aaa; }
.launch { position: absolute; right: 4px; top: 3px; width: 7px; height: 7px; border: 1px solid #6f8fbf; border-right-color: #d0e0f2; border-bottom-color: #d0e0f2; }
.launch::after { content: ""; position: absolute; right: -1px; bottom: -1px; width: 4px; height: 4px; border: 1px solid #5c7db0; border-left: 0; border-top: 0; background: linear-gradient(135deg, transparent 35%, #5c7db0 35% 60%, transparent 60%); }
.clipboard { width: 143px; }
.font { width: 245px; }
.para { width: 240px; }
.styles { flex: 1; min-width: 0; }
.editing { width: 69px; }
.big { flex-direction: column; width: 46px; padding-top: 4px; justify-content: flex-start; }
.big svg { margin-bottom: 2px; }
.big .arr { margin-top: 3px; }
.stack { display: flex; flex-direction: column; gap: 5px; padding-top: 3px; }
.stack button { height: 16px; justify-content: flex-start; gap: 4px; }
.editing .stack { padding-left: 5px; }
.rows { flex-direction: column; gap: 7px; padding: 7px 0 0 2px; }
.row { display: flex; gap: 3px; height: 21px; }
.selects { display: flex; }
.sel { display: flex; align-items: center; position: relative; height: 21px; background: #f0f6fd; border: 1px solid #abc1de; color: #222; }
.sel select { appearance: none; width: 100%; height: 19px; padding-left: 1px; outline: 0; }
.sel .arr { position: absolute; right: 4px; top: 8px; }
.sel.name { width: 111px; }
.sel.size { width: 57px; border-left: 0; }
.bg { display: flex; height: 21px; border: 1px solid #9fbbdd; border-radius: 2px; background: linear-gradient(#dbe8f7, #c8daef 45%, #bed3ec 50%, #d3e4f6); }
.bg button { height: 19px; }
.bg button + button { border-left: 1px solid #bdd0e8; }
.bg .on { background: linear-gradient(#fbd9a0, #fcb75c 45%, #fbab3f 50%, #fddc82); }
.w21 { width: 20px; }
.w22 { width: 21px; }
.w31 { width: 30px; }
.w32 { width: 31px; }
.w32 .arr { margin-left: 3px; }
.ic { width: 19px; height: 19px; }
.w31 .arr { margin-left: 2px; }
.glyph { font: bold 13px/19px "Liberation Serif", serif; color: #1c1c1c; }
.glyph.b { font-size: 14px; }
.glyph.i { font-style: italic; }
.glyph.u { text-decoration: underline; }
.glyph.s { font-size: 11px; text-decoration: line-through; }
.glyph sub, .glyph sup { font-size: 7px; line-height: 7px; color: #3a5fa5; }

.gallery { flex: 1; min-width: 0; display: flex; height: 58px; margin: 3px 0 0 3px; border: 1px solid #b9d0ec; border-radius: 2px; background: #d4e4f5; }
.items { flex: 1; min-width: 0; display: flex; justify-content: space-between; padding: 5px 6px 0 4px; }
.items button { width: 60px; height: 46px; flex-direction: column; justify-content: flex-end; background: #fff; overflow: hidden; padding-bottom: 1px; color: #1a1a66; }
.sample { width: 60px; height: 28px; padding: 0 2px; line-height: 28px; text-align: left; overflow: hidden; color: #111; }
.nm { height: 15px; font: 11px/15px Roboto, sans-serif; }
.normal { font-size: 12px; }
.h1, .h2, .h4, .h5, .title { font-family: "Liberation Serif", serif; }
.h1 { font-size: 18px; font-weight: bold; color: #365f91; }
.h2 { font-size: 16px; font-weight: bold; color: #4f81bd; }
.h4 { font-size: 15px; font-weight: bold; color: #000; }
.h5 { font-size: 14px; color: #243f60; }
.title { font-size: 30px; line-height: 24px; color: #17365d; }
.scroller { width: 13px; display: flex; flex-direction: column; }
.scroller button { flex: 1; flex-direction: column; border: 1px solid #a9c3e3; border-radius: 2px; background: #d5e5f7; }
.scroller .off { background: #e8eaed; }
.off .arr.up { border-bottom-color: #aab0ba; }
.change { width: 46px; padding-top: 3px; }
.change span { display: flex; align-items: center; gap: 3px; line-height: 13px; }
.change svg { margin-bottom: 4px; }
.change .arr { margin: 0; }

.work { flex: 1; display: flex; min-height: 0; }
.canvas { flex: 1; position: relative; overflow: hidden; padding: 6px 0 0 3px; display: flex; justify-content: center; background: linear-gradient(#a3c1ea, #8fb0de 22%, #7093c6 50%, #5179ad 73%, #628bc9 92%, #6791d2); }
.swoosh { position: absolute; left: 0; top: 0; width: 262px; height: 420px; }
.page { position: relative; width: 744px; background: #fff; color: #111; padding: 6px 0 0 87px; box-shadow: 2px 0 3px #44608e, -1px 0 1px #5d7db0; }
.mono { font: 13px/14px "Liberation Mono", monospace; text-shadow: 0 0 1px #666; }
.def { display: flex; gap: 6px; }
.text { font: 15px/17px "Liberation Serif", serif; white-space: nowrap; }
.first { margin-top: 19px; }
.last { margin-top: 18px; }
h2 { font: bold 15px/17px "Liberation Serif", serif; margin-top: 17px; }
.wave { text-decoration: underline wavy 1px; text-underline-offset: 1px; text-decoration-skip-ink: none; }
.green { text-decoration-color: #5aa860; }
.red { text-decoration-color: #d65a5a; }
.formula { display: flex; align-items: center; height: 75px; margin: 16px 0 0 8px; font: 19px/24px "Liberation Mono", monospace; text-shadow: 0 0 1px #222; }
.formula sub { font-size: 19px; line-height: 0; vertical-align: -3px; }
.lhs { width: 44px; padding-top: 16px; }
.eq { width: 34px; padding-top: 16px; }
.sum { width: 38px; height: 75px; display: flex; flex-direction: column; }
.sum small { font: bold 16px/16px "Liberation Mono", monospace; }
.sum svg { margin: 13px 0 2px 2px; }
.rhs { display: flex; gap: 11px; padding-top: 16px; }
.matrix { margin: 18px 0 0 58px; }
.mrow { display: grid; height: 14px; white-space: pre; grid-template-columns: 14px 15px 15px 15px 22px 23px 15px 15px 15px 22px 31px 14px 30px 15px 30px 15px 60px 30px 15px 30px 15px 30px 8px; }
.caret { position: absolute; left: 209px; top: 249px; }
.watermark { position: absolute; right: 38px; bottom: 11px; display: flex; flex-direction: column; color: #a9afba; opacity: .8; white-space: nowrap; }
.watermark strong { font-weight: normal; font-size: 18px; line-height: 24px; }
.watermark span { font-size: 13px; line-height: 18px; }

.vscroll { width: 10px; display: flex; flex-direction: column; background: #b6cff2; border-left: 1px solid #c9dcf5; }
.split { height: 2px; margin: 4px 0 2px 2px; background: #26395e; }
.ruler { height: 15px; }
.track { flex: 1; display: flex; flex-direction: column; align-items: center; padding: 7px 0 4px; background: #7796c8; border-left: 1px solid #55719f; }
.thumb { width: 9px; height: 102px; margin: auto 0 76px; display: flex; flex-direction: column; gap: 1px; align-items: flex-end; justify-content: center; border: 1px solid #55719f; border-right: 0; background: linear-gradient(90deg, #f3f7fc, #d3dfee); }
.thumb i { width: 6px; height: 1px; background: #5b6f92; }
.browse { height: 49px; padding: 2px 0; display: flex; flex-direction: column; justify-content: space-around; }
.browse button { height: 14px; flex-direction: column; }
.ball { width: 7px; height: 7px; border: 1px solid #444; border-radius: 50%; background: #e4e4c8; }

.status { height: 22px; display: flex; align-items: center; color: #15306b; background: linear-gradient(#dce9fa, #c5daf7 35%, #b2cdf3 45%, #d2e3fa); border-top: 1px solid #567db1; }
.status > button { height: 20px; border-right: 1px solid #9dbce6; }
.pg { width: 72px; }
.wd { width: 81px; }
.status .pr { width: 30px; border: 0; }
.status .lg { width: 90px; justify-content: flex-end; padding-right: 4px; }
.right { margin-left: auto; display: flex; align-items: center; height: 21px; width: 259px; padding-left: 6px; background: linear-gradient(#a9c7f1, #8fb3e8 45%, #82a9e3 50%, #a5c5f1); }
.views { display: flex; border: 1px solid #b6cff1; background: #c3d8f4; }
.views button { width: 17px; height: 16px; }
.views .on { background: #fcc870; }
.pct { width: 42px; }
.round { width: 16px; }
.right input { flex: 1; min-width: 0; width: 94px; height: 16px; appearance: none; background: linear-gradient(#5a78a8, #5a78a8) center / 100% 1px no-repeat; outline: 0; }
.right input::-webkit-slider-thumb { appearance: none; width: 8px; height: 12px; border: 1px solid #5a6f95; border-radius: 1px 1px 4px 4px; background: #eef4fc; }

.taskbar { height: 37px; display: flex; background: linear-gradient(90deg, #20343e, #1b2c3b 60%, #16233a); color: #fff; }
.start { width: 45px; }
.search { width: 324px; display: flex; align-items: center; gap: 11px; padding-left: 11px; background: #f2f2f2; border-bottom: 1px solid #aaa; }
.search input { flex: 1; min-width: 0; font-size: 13px; line-height: 20px; color: #444; outline: 0; }
.search input::placeholder { color: #444; opacity: 1; }
.sys { width: 45px; }
.apps { width: 558px; display: flex; margin-left: 1px; }
.apps button { flex: 1; position: relative; }
.apps .run::after { content: ""; position: absolute; left: 4px; right: 4px; bottom: 0; height: 3px; background: #70b1e4; }
.apps .explorer { background: #a9682f; border-bottom: 3px solid #f37a16; }
.apps .current { background: #44525f; }
.apps .current.run::after { left: 0; right: 0; }
.tray { flex: 1; min-width: 0; display: flex; align-items: center; gap: 8px; padding-left: 5px; font-size: 12px; }
.kb { width: 24px; }
time { width: 58px; text-align: center; font-size: 11px; line-height: 17px; }
.note { margin-left: 6px; }
</style>
